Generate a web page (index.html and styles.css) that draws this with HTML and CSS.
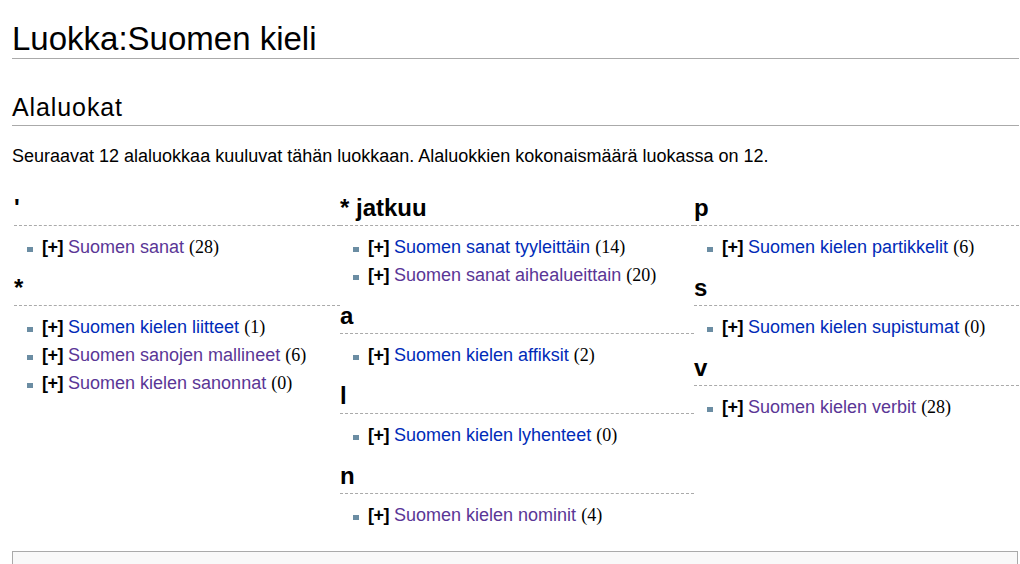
FILE: index.html
```html
<!DOCTYPE html>
<html lang="fi">
<head>
<meta charset="utf-8">
<title>Luokka:Suomen kieli</title>
<link rel="stylesheet" href="styles.css">
</head>
<body>
<div class="page">
  <h1 class="title">Luokka:Suomen kieli</h1>
  <h2 class="section">Alaluokat</h2>
  <p class="intro">Seuraavat 12 alaluokkaa kuuluvat tähän luokkaan. Alaluokkien kokonaismäärä luokassa on 12.</p>
  <div class="columns">
    <div class="col col-1">
      <div class="group">
        <h3 class="letter">'</h3>
        <ul class="items">
          <li><b class="toggle">[+]</b> <a class="visited" href="#">Suomen sanat</a> <span class="count">(28)</span></li>
        </ul>
      </div>
      <div class="group">
        <h3 class="letter">*</h3>
        <ul class="items">
          <li><b class="toggle">[+]</b> <a href="#">Suomen kielen liitteet</a> <span class="count">(1)</span></li>
          <li><b class="toggle">[+]</b> <a class="visited" href="#">Suomen sanojen mallineet</a> <span class="count">(6)</span></li>
          <li><b class="toggle">[+]</b> <a class="visited" href="#">Suomen kielen sanonnat</a> <span class="count">(0)</span></li>
        </ul>
      </div>
    </div>
    <div class="col col-2">
      <div class="group">
        <h3 class="letter">* jatkuu</h3>
        <ul class="items">
          <li><b class="toggle">[+]</b> <a href="#">Suomen sanat tyyleittäin</a> <span class="count">(14)</span></li>
          <li><b class="toggle">[+]</b> <a class="visited" href="#">Suomen sanat aihealueittain</a> <span class="count">(20)</span></li>
        </ul>
      </div>
      <div class="group">
        <h3 class="letter">a</h3>
        <ul class="items">
          <li><b class="toggle">[+]</b> <a href="#">Suomen kielen affiksit</a> <span class="count">(2)</span></li>
        </ul>
      </div>
      <div class="group">
        <h3 class="letter">l</h3>
        <ul class="items">
          <li><b class="toggle">[+]</b> <a href="#">Suomen kielen lyhenteet</a> <span class="count">(0)</span></li>
        </ul>
      </div>
      <div class="group">
        <h3 class="letter">n</h3>
        <ul class="items">
          <li><b class="toggle">[+]</b> <a class="visited" href="#">Suomen kielen nominit</a> <span class="count">(4)</span></li>
        </ul>
      </div>
    </div>
    <div class="col col-3">
      <div class="group">
        <h3 class="letter">p</h3>
        <ul class="items">
          <li><b class="toggle">[+]</b> <a href="#">Suomen kielen partikkelit</a> <span class="count">(6)</span></li>
        </ul>
      </div>
      <div class="group">
        <h3 class="letter">s</h3>
        <ul class="items">
          <li><b class="toggle">[+]</b> <a href="#">Suomen kielen supistumat</a> <span class="count">(0)</span></li>
        </ul>
      </div>
      <div class="group">
        <h3 class="letter">v</h3>
        <ul class="items">
          <li><b class="toggle">[+]</b> <a class="visited" href="#">Suomen kielen verbit</a> <span class="count">(28)</span></li>
        </ul>
      </div>
    </div>
  </div>
  <div class="catlinks"></div>
</div>
</body>
</html>
```

FILE: styles.css
```css
html, body {
  margin: 0;
  padding: 0;
  background: #ffffff;
}

body {
  font-family: "Liberation Sans", Arial, sans-serif;
  color: #000000;
}

.page {
  padding: 21px 2px 0 12px;
}

.title {
  margin: 0 -1px 0 0;
  font-size: 33px;
  font-weight: normal;
  line-height: 36px;
  padding-bottom: 1px;
  border-bottom: 1px solid #aaaaaa;
}

.section {
  margin: 34px -1px 0 0;
  font-size: 25px;
  letter-spacing: 0.9px;
  font-weight: normal;
  line-height: 28px;
  padding-bottom: 4px;
  border-bottom: 1px solid #aaaaaa;
}

.intro {
  margin: 19px 0 0 0;
  font-size: 18px;
  line-height: 22px;
}

.columns {
  display: grid;
  grid-template-columns: 326px 354px 1fr;
  margin: 28px -1px 0 2px;
}

.group + .group {
  margin-top: 14px;
}

.letter {
  margin: 0;
  font-size: 24px;
  font-weight: bold;
  line-height: 26px;
  padding-bottom: 4px;
  border-bottom: 1px dashed #aaaaaa;
}

.items {
  list-style: none;
  margin: 0;
  padding: 7px 0 0 0;
  font-size: 18px;
  line-height: 28px;
}

.items li {
  padding-left: 13px;
  white-space: nowrap;
}

.items li::before {
  content: "";
  display: inline-block;
  width: 6px;
  height: 5px;
  margin-right: 9px;
  background: #6b8da3;
  vertical-align: 1px;
}

.toggle {
  font-weight: bold;
  letter-spacing: -0.5px;
  color: #000000;
}

.items a {
  color: #002bb8;
  text-decoration: none;
}

.items a.visited {
  color: #5a3696;
}

.count {
  font-family: "Liberation Serif", "Times New Roman", serif;
}

.catlinks {
  margin-top: 22px;
  height: 40px;
  border: 1px solid #aaaaaa;
  background: #f9f9f9;
}
```
